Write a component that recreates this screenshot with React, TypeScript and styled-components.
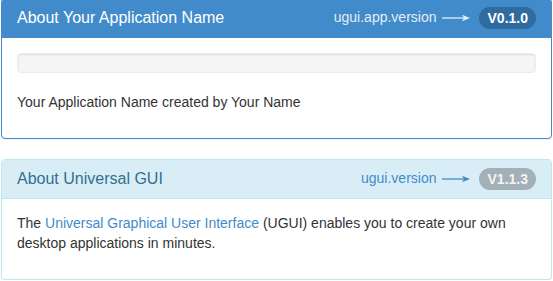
import React from 'react';
import styled, { createGlobalStyle, css } from 'styled-components';

const colors = {
  primary: '#428bca',
  primaryBadge: '#2f6aa0',
  infoBg: '#d9edf7',
  infoBorder: '#bce8f1',
  infoText: '#31708f',
  text: '#333333',
  link: '#428bca',
};

const GlobalStyle = createGlobalStyle`
  html, body {
    margin: 0;
    padding: 0;
    background: #ffffff;
  }
  body {
    font-family: "Liberation Sans", Arial, sans-serif;
    font-size: 14px;
    line-height: 1.42857;
    color: ${colors.text};
  }
`;

const Page = styled.div`
  padding: 0 1px;
  margin-top: -2px;
`;

type Variant = 'primary' | 'info';

const Panel = styled.section<{ $variant: Variant }>`
  border: 1px solid ${p => (p.$variant === 'primary' ? colors.primary : colors.infoBorder)};
  border-radius: 4px;
  background: #fff;
  margin-bottom: 20px;
  box-shadow: 0 1px 1px rgba(0, 0, 0, 0.05);

  &:last-child {
    margin-bottom: 0;
  }
`;

const PanelHeading = styled.header<{ $variant: Variant }>`
  display: flex;
  align-items: center;
  justify-content: space-between;
  padding: 10px 15px;
  border-top-left-radius: 3px;
  border-top-right-radius: 3px;
  ${p =>
    p.$variant === 'primary'
      ? css`
          background: ${colors.primary};
          border-bottom: 1px solid ${colors.primary};
          color: #fff;
        `
      : css`
          background: ${colors.infoBg};
          border-bottom: 1px solid ${colors.infoBorder};
          color: ${colors.infoText};
        `}
`;

const PanelTitle = styled.h3`
  margin: 0;
  font-size: 16px;
  font-weight: 400;
  line-height: 18px;
  color: inherit;
`;

const VersionInfo = styled.div<{ $variant: Variant }>`
  display: flex;
  align-items: center;
  height: 18px;
  font-size: 14px;
  color: ${p => (p.$variant === 'primary' ? '#e3edf6' : colors.link)};
`;

const Arrow = styled.svg`
  margin: 0 9px 0 5px;
  flex: none;
`;

const Badge = styled.span<{ $variant: Variant }>`
  display: inline-block;
  padding: 3px 8px 3px 9px;
  border-radius: 11px;
  font-size: 14px;
  font-weight: 700;
  line-height: 16px;
  color: ${p => (p.$variant === 'primary' ? '#ffffff' : '#f2f5f7')};
  background: ${p => (p.$variant === 'primary' ? colors.primaryBadge : '#a3b0b8')};
`;

const PanelBody = styled.div`
  padding: 15px;
`;

const Progress = styled.div`
  height: 20px;
  margin-bottom: 20px;
  background: #f5f5f5;
  border-radius: 4px;
  box-shadow: inset 0 1px 2px rgba(0, 0, 0, 0.1);
  border: 1px solid #ececec;
  box-sizing: border-box;
`;

const Paragraph = styled.p`
  margin: 0 0 10px;
`;

const Link = styled.a`
  color: ${colors.link};
  text-decoration: none;
`;

const VersionArrow = ({ color }: { color: string }) => (
  <Arrow width="28" height="8" viewBox="0 0 28 8">
    <line x1="0" y1="4" x2="22" y2="4" stroke={color} strokeWidth="1.3" />
    <polygon points="20,0.8 28,4 20,7.2 22,4" fill={color} />
  </Arrow>
);

const AboutPanel = ({
  variant,
  title,
  versionKey,
  version,
  children,
}: {
  variant: Variant;
  title: string;
  versionKey: string;
  version: string;
  children: React.ReactNode;
}) => (
  <Panel $variant={variant}>
    <PanelHeading $variant={variant}>
      <PanelTitle>{title}</PanelTitle>
      <VersionInfo $variant={variant}>
        {versionKey}
        <VersionArrow color={variant === 'primary' ? '#e3edf6' : colors.link} />
        <Badge $variant={variant}>{version}</Badge>
      </VersionInfo>
    </PanelHeading>
    <PanelBody>{children}</PanelBody>
  </Panel>
);

const App = () => (
  <>
    <GlobalStyle />
    <Page>
      <AboutPanel
        variant="primary"
        title="About Your Application Name"
        versionKey="ugui.app.version"
        version="V0.1.0"
      >
        <Progress />
        <Paragraph>Your Application Name created by Your Name</Paragraph>
      </AboutPanel>
      <AboutPanel variant="info" title="About Universal GUI" versionKey="ugui.version" version="V1.1.3">
        <Paragraph>
          The <Link href="#">Universal Graphical User Interface</Link> (UGUI) enables you to create your own
          desktop applications in minutes.
        </Paragraph>
      </AboutPanel>
    </Page>
  </>
);

export default App;
